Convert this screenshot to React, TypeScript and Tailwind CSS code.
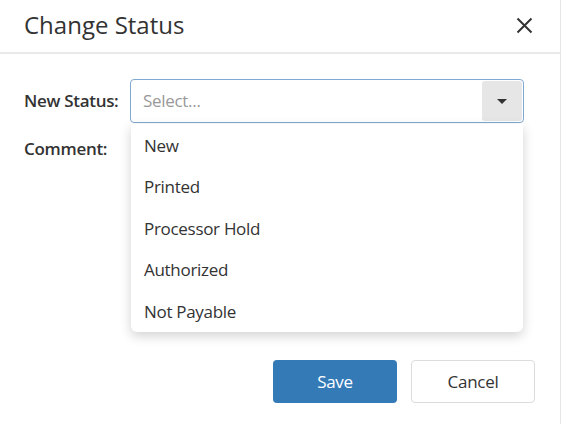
import React from "react";

export default function App() {
  const items = ["New", "Printed", "Processor Hold", "Authorized", "Not Payable"];
  return (
    <div
      className="w-[562px] h-[424px] bg-white overflow-hidden"
      style={{ fontFamily: '"Open Sans", "Noto Sans", sans-serif' }}
    >
      <div className="w-[561px] h-[424px] border-r border-[#e6e6e6] flex flex-col">
        <div className="h-[54px] flex items-center justify-between pl-6 pr-[27px] border-b-2 border-[#e9e9e9] shrink-0">
          <h1 className="text-[24px] text-[#333] font-normal leading-none -mt-[3px]">Change Status</h1>
          <svg width="17" height="17" viewBox="0 0 17 17" className="text-[#333] -mt-[2px]">
            <path d="M1.5 1.5 L15.5 15.5 M15.5 1.5 L1.5 15.5" stroke="currentColor" strokeWidth="2" />
          </svg>
        </div>
        <div className="pl-6 pt-[25px] flex-1 flex flex-col">
          <div className="flex items-center">
            <label className="w-[106px] text-[17px] font-semibold text-[#333] tracking-[-0.3px]">New Status:</label>
            <div className="relative w-[394px] h-[44px]">
              <div className="w-full h-full border border-[#80a9d2] rounded-[4px] flex items-center justify-between pl-[12px] pr-[1px]">
                <span className="text-[17px] text-[#999] tracking-[-0.3px]">Select...</span>
                <div className="w-[40px] h-[40px] bg-[#e6e6e6] rounded-[3px] flex items-center justify-center">
                  <div className="w-0 h-0 border-l-[5px] border-r-[5px] border-t-[5px] border-l-transparent border-r-transparent border-t-[#333]" />
                </div>
              </div>
              <div className="absolute left-[1px] right-[1px] top-[45px] bg-white rounded-b-[6px] shadow-[0_4px_12px_rgba(0,0,0,0.18)] z-10 pt-[1px]">
                {items.map((it) => (
                  <div key={it} className="h-[41.4px] flex items-center pl-[13px] text-[17px] text-[#333] tracking-[-0.3px]">
                    {it}
                  </div>
                ))}
              </div>
            </div>
          </div>
          <div className="mt-[13px]">
            <label className="text-[17px] font-semibold text-[#333] tracking-[-0.3px]">Comment:</label>
          </div>
        </div>
        <div className="flex justify-end gap-[14px] pr-[25px] pb-[21px]">
          <button className="w-[124px] h-[43px] bg-[#337ab7] rounded-[4px] text-white text-[17px] tracking-[-0.3px]">Save</button>
          <button className="w-[124px] h-[43px] bg-white border border-[#dcdcdc] rounded-[4px] text-[#333] text-[17px] tracking-[-0.3px]">Cancel</button>
        </div>
      </div>
    </div>
  );
}
